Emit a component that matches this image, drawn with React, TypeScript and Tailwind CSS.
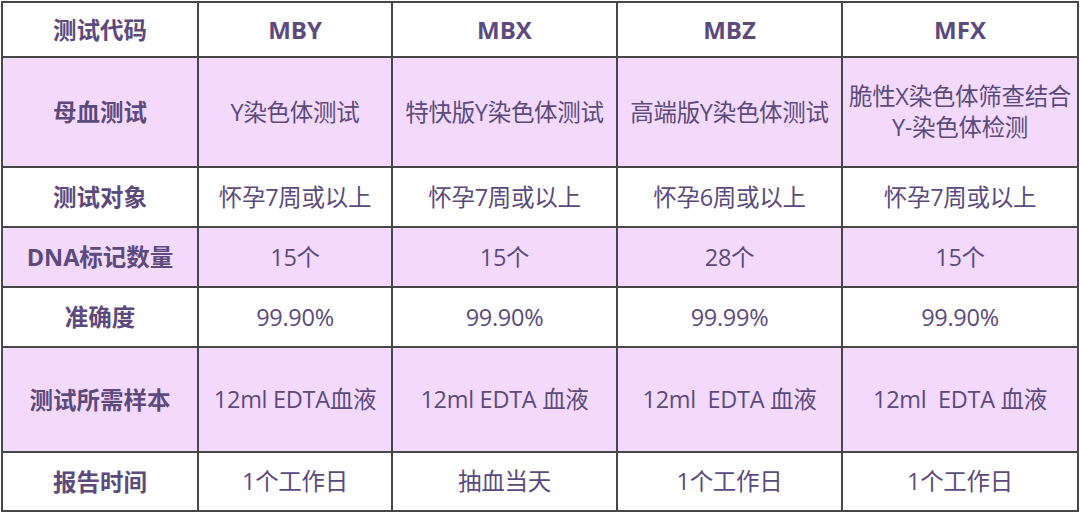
import React from 'react'

const rows = [
  { label: '测试代码', cells: ['MBY', 'MBX', 'MBZ', 'MFX'], h: 'h-[55px]', head: true },
  {
    label: '母血测试',
    cells: ['Y染色体测试', '特快版Y染色体测试', '高端版Y染色体测试', '脆性X染色体筛查结合\nY-染色体检测'],
    h: 'h-[110px]',
    purple: true,
  },
  { label: '测试对象', cells: ['怀孕7周或以上', '怀孕7周或以上', '怀孕6周或以上', '怀孕7周或以上'], h: 'h-[60px]' },
  { label: 'DNA标记数量', cells: ['15个', '15个', '28个', '15个'], h: 'h-[60px]', purple: true },
  { label: '准确度', cells: ['99.90%', '99.90%', '99.99%', '99.90%'], h: 'h-[60px]' },
  {
    label: '测试所需样本',
    cells: ['12ml EDTA血液', '12ml EDTA 血液', '12ml\u00a0\u00a0EDTA 血液', '12ml\u00a0\u00a0EDTA 血液'],
    h: 'h-[105px]',
    purple: true,
  },
  { label: '报告时间', cells: ['1个工作日', '抽血当天', '1个工作日', '1个工作日'], h: 'h-[59px]' },
]

const cellBase = 'border-2 border-[#474747] text-center align-middle px-0'

export default function App() {
  return (
    <div
      className="w-[1080px] h-[514px] bg-white p-px text-[#5c4a7c]"
      style={{ fontFamily: '"Open Sans", "Noto Sans CJK SC", sans-serif' }}
    >
      <table className="table-fixed border-collapse w-[1076px]">
        <colgroup>
          <col className="w-[196px]" />
          <col className="w-[194px]" />
          <col className="w-[225px]" />
          <col className="w-[225px]" />
          <col className="w-[236px]" />
        </colgroup>
        <tbody>
          {rows.map((r) => (
            <tr key={r.label} className={`${r.h} ${r.purple ? 'bg-[#f3dafd]' : 'bg-white'}`}>
              <td className={`${cellBase} font-bold text-[23.5px] leading-[30px]`}>{r.label}</td>
              {r.cells.map((c, i) => (
                <td
                  key={i}
                  className={`${cellBase} whitespace-pre-line leading-[31px] ${
                    r.head ? 'font-bold text-[24px]' : 'text-[23.5px] tracking-[-0.3px]'
                  }`}
                >
                  {c}
                </td>
              ))}
            </tr>
          ))}
        </tbody>
      </table>
    </div>
  )
}
